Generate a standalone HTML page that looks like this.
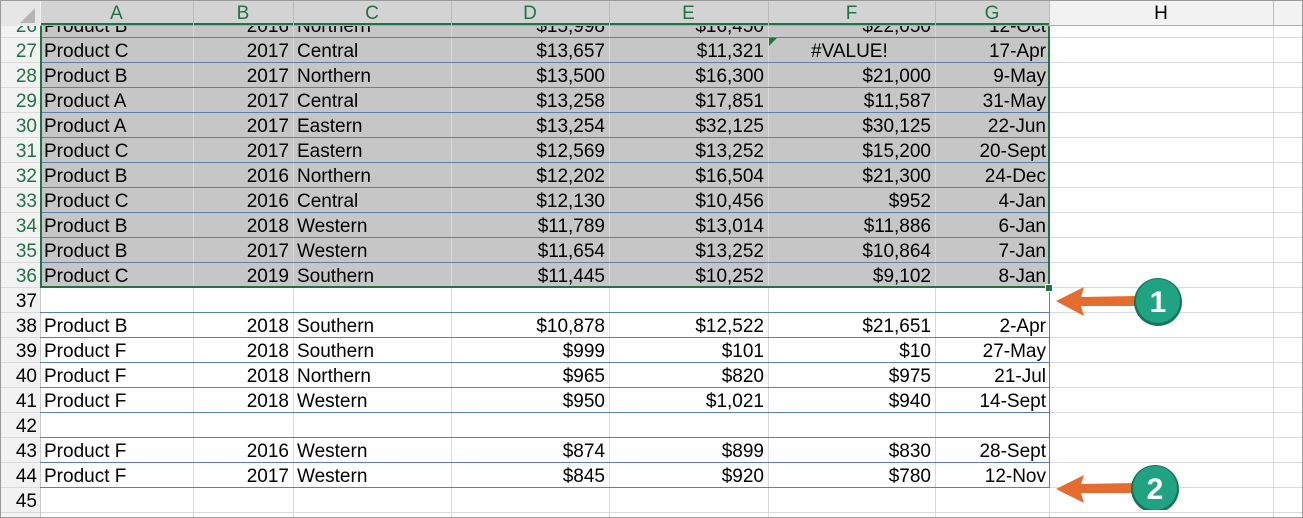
<!DOCTYPE html>
<html><head><meta charset="utf-8"><style>
body{margin:0;width:1303px;height:518px;overflow:hidden;background:#fff;font-family:"Liberation Sans",Arial,sans-serif;position:relative}
.a{position:absolute}
.r{position:absolute;left:0;width:1303px;height:25px;font-size:19px;line-height:25px;color:#000}
.r span{position:absolute;top:2px;white-space:nowrap}
.h{left:0;width:37px;text-align:right;color:#000}
.g .h{color:#217346}
.A{left:44px}
.B{left:193px;width:96px;text-align:right}
.C{left:297px}
.D{left:451px;width:154px;text-align:right}
.E{left:609px;width:155px;text-align:right}
.F{left:768px;width:163px;text-align:right}
.G{left:935px;width:111px;text-align:right}
.vl{position:absolute;width:1px;background:#d9d9d9}
.hl{position:absolute;height:1px;background:#d9d9d9;left:0;width:1303px}
.bl{position:absolute;height:1px;background:#5b7fb0;left:40px;width:1009px}
</style></head><body>
<div class="a" style="left:40px;top:26px;width:1009px;height:261px;background:#c6c6c6"></div>
<div class="a" style="left:0;top:26px;width:40px;height:492px;background:#f2f2f2"></div>
<div class="hl" style="top:37px"></div><div class="hl" style="top:62px"></div><div class="hl" style="top:87px"></div><div class="hl" style="top:112px"></div><div class="hl" style="top:137px"></div><div class="hl" style="top:162px"></div><div class="hl" style="top:187px"></div><div class="hl" style="top:212px"></div><div class="hl" style="top:237px"></div><div class="hl" style="top:262px"></div><div class="hl" style="top:287px"></div><div class="hl" style="top:312px"></div><div class="hl" style="top:337px"></div><div class="hl" style="top:362px"></div><div class="hl" style="top:387px"></div><div class="hl" style="top:412px"></div><div class="hl" style="top:437px"></div><div class="hl" style="top:462px"></div><div class="hl" style="top:487px"></div><div class="hl" style="top:512px"></div>
<div class="vl" style="left:40px;top:0;height:518px;background:#c8c8c8"></div>
<div class="vl" style="left:193px;top:0;height:518px"></div><div class="vl" style="left:293px;top:0;height:518px"></div><div class="vl" style="left:451px;top:0;height:518px"></div><div class="vl" style="left:609px;top:0;height:518px"></div><div class="vl" style="left:768px;top:0;height:518px"></div><div class="vl" style="left:935px;top:0;height:518px"></div><div class="vl" style="left:1049px;top:0;height:518px"></div><div class="vl" style="left:1273px;top:0;height:518px"></div>
<div class="bl" style="top:37px"></div><div class="bl" style="top:62px"></div><div class="bl" style="top:87px"></div><div class="bl" style="top:112px"></div><div class="bl" style="top:137px"></div><div class="bl" style="top:162px"></div><div class="bl" style="top:187px"></div><div class="bl" style="top:212px"></div><div class="bl" style="top:237px"></div><div class="bl" style="top:262px"></div><div class="bl" style="top:312px"></div><div class="bl" style="top:337px"></div><div class="bl" style="top:362px"></div><div class="bl" style="top:387px"></div><div class="bl" style="top:412px"></div><div class="bl" style="top:437px"></div><div class="bl" style="top:462px"></div><div class="bl" style="top:487px"></div>
<div class="a" style="left:1049px;top:287px;width:1px;height:201px;background:#5b7fb0"></div>
<div class="a" style="left:40px;top:26px;width:2px;height:262px;background:#217346"></div>
<div class="a" style="left:40px;top:286px;width:1010px;height:2px;background:#217346"></div>
<div class="a" style="left:1048px;top:26px;width:2px;height:262px;background:#217346"></div>
<div class="a" style="left:1045px;top:284px;width:6px;height:6px;background:#217346;border:1px solid #fff"></div>
<div class="a" style="left:769px;top:38px;width:0;height:0;border-top:8px solid #1e7a2e;border-right:8px solid transparent"></div>

<div class="r g" style="top:12px"><span class="h">26</span><span class="A">Product B</span><span class="B">2016</span><span class="C">Northern</span><span class="D">$15,998</span><span class="E">$16,450</span><span class="F">$22,050</span><span class="G">12-Oct</span></div>
<div class="r g" style="top:37px"><span class="h">27</span><span class="A">Product C</span><span class="B">2017</span><span class="C">Central</span><span class="D">$13,657</span><span class="E">$11,321</span><span style="left:811px">#VALUE!</span><span class="G">17-Apr</span></div>
<div class="r g" style="top:62px"><span class="h">28</span><span class="A">Product B</span><span class="B">2017</span><span class="C">Northern</span><span class="D">$13,500</span><span class="E">$16,300</span><span class="F">$21,000</span><span class="G">9-May</span></div>
<div class="r g" style="top:87px"><span class="h">29</span><span class="A">Product A</span><span class="B">2017</span><span class="C">Central</span><span class="D">$13,258</span><span class="E">$17,851</span><span class="F">$11,587</span><span class="G">31-May</span></div>
<div class="r g" style="top:112px"><span class="h">30</span><span class="A">Product A</span><span class="B">2017</span><span class="C">Eastern</span><span class="D">$13,254</span><span class="E">$32,125</span><span class="F">$30,125</span><span class="G">22-Jun</span></div>
<div class="r g" style="top:137px"><span class="h">31</span><span class="A">Product C</span><span class="B">2017</span><span class="C">Eastern</span><span class="D">$12,569</span><span class="E">$13,252</span><span class="F">$15,200</span><span class="G">20-Sept</span></div>
<div class="r g" style="top:162px"><span class="h">32</span><span class="A">Product B</span><span class="B">2016</span><span class="C">Northern</span><span class="D">$12,202</span><span class="E">$16,504</span><span class="F">$21,300</span><span class="G">24-Dec</span></div>
<div class="r g" style="top:187px"><span class="h">33</span><span class="A">Product C</span><span class="B">2016</span><span class="C">Central</span><span class="D">$12,130</span><span class="E">$10,456</span><span class="F">$952</span><span class="G">4-Jan</span></div>
<div class="r g" style="top:212px"><span class="h">34</span><span class="A">Product B</span><span class="B">2018</span><span class="C">Western</span><span class="D">$11,789</span><span class="E">$13,014</span><span class="F">$11,886</span><span class="G">6-Jan</span></div>
<div class="r g" style="top:237px"><span class="h">35</span><span class="A">Product B</span><span class="B">2017</span><span class="C">Western</span><span class="D">$11,654</span><span class="E">$13,252</span><span class="F">$10,864</span><span class="G">7-Jan</span></div>
<div class="r g" style="top:262px"><span class="h">36</span><span class="A">Product C</span><span class="B">2019</span><span class="C">Southern</span><span class="D">$11,445</span><span class="E">$10,252</span><span class="F">$9,102</span><span class="G">8-Jan</span></div>
<div class="r" style="top:287px"><span class="h">37</span></div>
<div class="r" style="top:312px"><span class="h">38</span><span class="A">Product B</span><span class="B">2018</span><span class="C">Southern</span><span class="D">$10,878</span><span class="E">$12,522</span><span class="F">$21,651</span><span class="G">2-Apr</span></div>
<div class="r" style="top:337px"><span class="h">39</span><span class="A">Product F</span><span class="B">2018</span><span class="C">Southern</span><span class="D">$999</span><span class="E">$101</span><span class="F">$10</span><span class="G">27-May</span></div>
<div class="r" style="top:362px"><span class="h">40</span><span class="A">Product F</span><span class="B">2018</span><span class="C">Northern</span><span class="D">$965</span><span class="E">$820</span><span class="F">$975</span><span class="G">21-Jul</span></div>
<div class="r" style="top:387px"><span class="h">41</span><span class="A">Product F</span><span class="B">2018</span><span class="C">Western</span><span class="D">$950</span><span class="E">$1,021</span><span class="F">$940</span><span class="G">14-Sept</span></div>
<div class="r" style="top:412px"><span class="h">42</span></div>
<div class="r" style="top:437px"><span class="h">43</span><span class="A">Product F</span><span class="B">2016</span><span class="C">Western</span><span class="D">$874</span><span class="E">$899</span><span class="F">$830</span><span class="G">28-Sept</span></div>
<div class="r" style="top:462px"><span class="h">44</span><span class="A">Product F</span><span class="B">2017</span><span class="C">Western</span><span class="D">$845</span><span class="E">$920</span><span class="F">$780</span><span class="G">12-Nov</span></div>
<div class="r" style="top:487px"><span class="h">45</span></div>

<div class="a" style="left:0;top:0;width:1303px;height:26px;background:#f2f2f2;border-bottom:1px solid #ababab;box-sizing:border-box"></div>
<div class="a" style="left:41px;top:0;width:1008px;height:25px;background:#d3d3d3;border-bottom:2px solid #217346;box-sizing:border-box"></div>
<div class="a" style="left:0;top:0;width:40px;height:26px;background:#e6e6e6"></div>
<div class="a" style="left:20px;top:8px;width:0;height:0;border-bottom:15px solid #b5b5b5;border-left:15px solid transparent"></div>
<div class="a" style="left:0;top:0;width:1303px;height:26px;font-size:19px;line-height:27px;color:#217346">
<span class="a" style="left:40px;width:153px;text-align:center">A</span>
<span class="a" style="left:193px;width:100px;text-align:center">B</span>
<span class="a" style="left:293px;width:158px;text-align:center">C</span>
<span class="a" style="left:451px;width:158px;text-align:center">D</span>
<span class="a" style="left:609px;width:159px;text-align:center">E</span>
<span class="a" style="left:768px;width:167px;text-align:center">F</span>
<span class="a" style="left:935px;width:114px;text-align:center">G</span>
<span class="a" style="left:1049px;width:224px;text-align:center;color:#000">H</span>
</div>
<div class="vl" style="left:193px;top:0;height:26px;background:#bbb"></div><div class="vl" style="left:293px;top:0;height:26px;background:#bbb"></div><div class="vl" style="left:451px;top:0;height:26px;background:#bbb"></div><div class="vl" style="left:609px;top:0;height:26px;background:#bbb"></div><div class="vl" style="left:768px;top:0;height:26px;background:#bbb"></div><div class="vl" style="left:935px;top:0;height:26px;background:#bbb"></div><div class="vl" style="left:1049px;top:0;height:26px;background:#bbb"></div><div class="vl" style="left:1273px;top:0;height:26px;background:#bbb"></div>
<div class="a" style="left:0;top:0;width:1303px;height:518px;border:1px solid #9a9a9a;box-sizing:border-box"></div>

<svg class="a" style="left:1040px;top:270px" width="160" height="240" viewBox="0 0 160 240">
<g fill="#e46c2f">
<polygon points="16,31 44,17 41,27 96,26 98,36 41,36 44,46"/>
<polygon points="16,219 44,205 41,214 96,213 98,223 41,223 44,233"/>
</g>
<circle cx="118" cy="32" r="24" fill="#17735c"/>
<circle cx="118" cy="31" r="22" fill="#1fa383"/>
<text x="118" y="42" font-family="Liberation Sans, sans-serif" font-weight="bold" font-size="30" fill="#fff" text-anchor="middle">1</text>
<circle cx="115" cy="219" r="24" fill="#17735c"/>
<circle cx="115" cy="218" r="22" fill="#1fa383"/>
<text x="115" y="229" font-family="Liberation Sans, sans-serif" font-weight="bold" font-size="30" fill="#fff" text-anchor="middle">2</text>
</svg>
</body></html>
